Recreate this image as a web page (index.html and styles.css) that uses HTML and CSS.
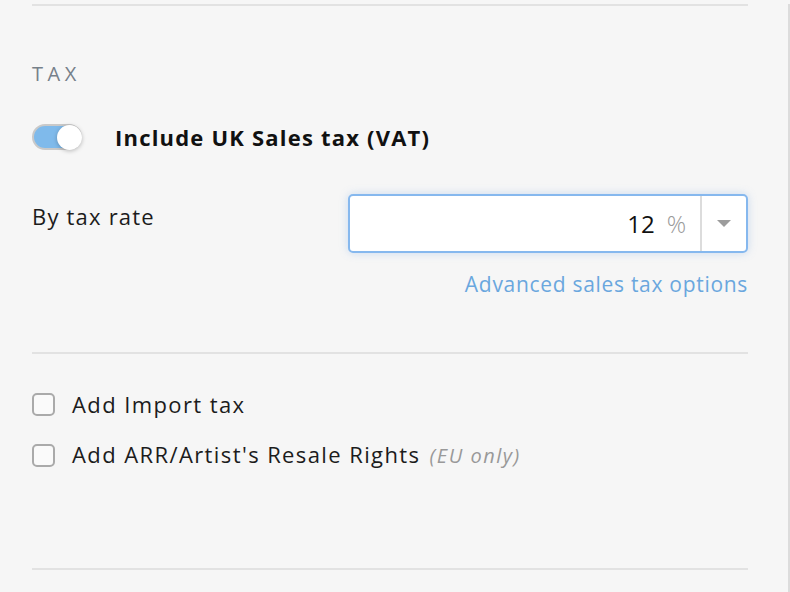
FILE: index.html
```html
<!DOCTYPE html>
<html lang="en">
<head>
  <meta charset="UTF-8">
  <title>Tax settings</title>
  <link rel="stylesheet" href="styles.css">
</head>
<body>
  <div class="panel">
    <div class="divider divider-top"></div>

    <div class="tax-section">
      <div class="section-title">TAX</div>

      <div class="toggle-row">
        <span class="toggle on"><span class="knob"></span></span>
        <span class="toggle-label">Include UK Sales tax (VAT)</span>
      </div>

      <div class="rate-row">
        <div class="rate-label">By tax rate</div>
        <div class="rate-field">
          <div class="rate-input">
            <span class="rate-value">12</span>
            <span class="rate-unit">%</span>
          </div>
          <div class="rate-dropdown"><span class="caret"></span></div>
        </div>
      </div>

      <div class="advanced-row">
        <a class="advanced-link" href="#">Advanced sales tax options</a>
      </div>
    </div>

    <div class="divider"></div>

    <div class="extras">
      <label class="check-row">
        <span class="checkbox"></span>
        <span>Add Import tax</span>
      </label>
      <label class="check-row">
        <span class="checkbox"></span>
        <span>Add ARR/Artist's Resale Rights <em class="note">(EU only)</em></span>
      </label>
    </div>

    <div class="divider divider-bottom"></div>
  </div>
</body>
</html>
```

FILE: styles.css
```css
body {
  margin: 0;
  background: #f6f6f6;
  font-family: "Open Sans", "Liberation Sans", sans-serif;
  color: #1c1c1c;
  overflow: hidden;
}

.panel {
  width: 716px;
  height: 592px;
  padding: 0 40px 0 32px;
  border-right: 2px solid #dcdcdc;
}

.divider {
  height: 2px;
  background: #e2e2e2;
}

.divider-top {
  margin-top: 4px;
}

.tax-section {
  padding: 56px 0 54px;
}

.section-title {
  font-size: 20px;
  line-height: 24px;
  letter-spacing: 4.6px;
  color: #76808a;
}

.toggle-row {
  display: flex;
  align-items: center;
  margin-top: 37px;
  height: 28px;
}

.toggle {
  position: relative;
  width: 50px;
  height: 26px;
  box-sizing: border-box;
  border: 2px solid #c9c9c9;
  border-radius: 13px;
  background: #e6e6e6;
}

.toggle.on {
  background: #7fbaeb;
}

.toggle .knob {
  position: absolute;
  top: -1px;
  left: 23px;
  width: 25px;
  height: 25px;
  border-radius: 50%;
  background: #fff;
  box-shadow: 0 1px 4px rgba(0, 0, 0, 0.25);
}

.toggle-label {
  margin-left: 33px;
  font-size: 22px;
  font-weight: bold;
  letter-spacing: 1.2px;
  color: #111;
}

.rate-row {
  display: flex;
  justify-content: space-between;
  align-items: flex-start;
  margin-top: 43px;
}

.rate-label {
  font-size: 22px;
  line-height: 26px;
  letter-spacing: 1.2px;
  margin-top: 9px;
}

.rate-field {
  display: flex;
  width: 400px;
  height: 59px;
  box-sizing: border-box;
  border: 2px solid #86b8ee;
  border-radius: 5px;
  background: #fff;
  box-shadow: 0 0 8px rgba(120, 170, 230, 0.35);
}

.rate-input {
  flex: 1;
  display: flex;
  justify-content: flex-end;
  align-items: center;
  padding-right: 14px;
}

.rate-value {
  font-size: 24px;
  color: #111;
}

.rate-unit {
  margin-left: 12px;
  font-size: 24px;
  font-weight: 300;
  color: #9a9a9a;
}

.rate-dropdown {
  width: 44px;
  border-left: 2px solid #dcdcdc;
  display: flex;
  justify-content: center;
  align-items: center;
}

.caret {
  width: 0;
  height: 0;
  border-left: 7px solid transparent;
  border-right: 7px solid transparent;
  border-top: 7px solid #9c9c9c;
}

.advanced-row {
  display: flex;
  justify-content: flex-end;
  margin-top: 17px;
}

.advanced-link {
  font-size: 21px;
  line-height: 28px;
  letter-spacing: 0.7px;
  color: #6aa7de;
  text-decoration: none;
}

.extras {
  padding: 37px 0 99px;
  display: flex;
  flex-direction: column;
  gap: 24px;
}

.check-row {
  display: flex;
  align-items: center;
  font-size: 22px;
  line-height: 26px;
  letter-spacing: 1.4px;
}

.checkbox {
  width: 23px;
  height: 23px;
  box-sizing: border-box;
  border: 2px solid #aaa;
  border-radius: 5px;
  background: #fafafa;
  margin-right: 17px;
}

.note {
  margin-left: 2px;
  font-size: 20px;
  letter-spacing: 1.5px;
  color: #999;
}
```
